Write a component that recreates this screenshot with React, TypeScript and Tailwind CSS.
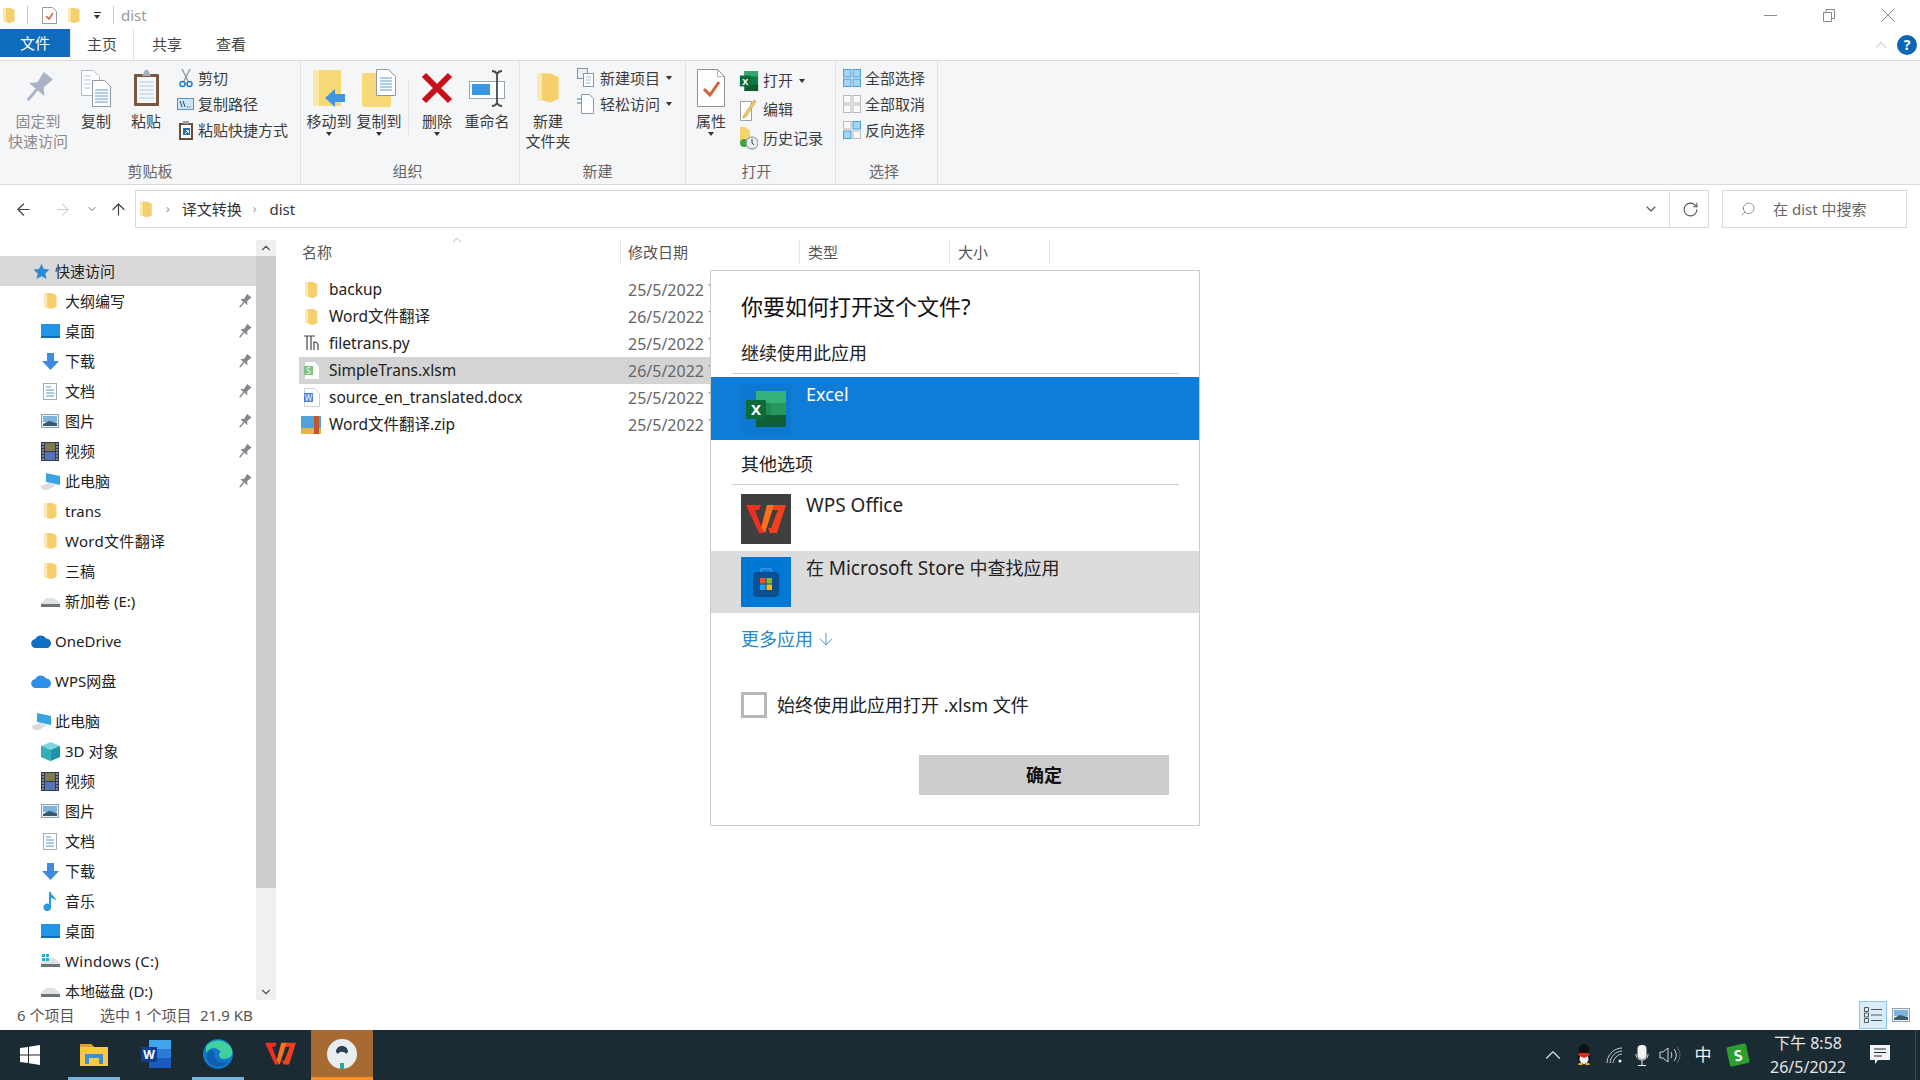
import type { ReactNode } from 'react'
import { ArrowDown, ArrowLeft, ArrowRight, ArrowUp, ChevronDown, ChevronUp, RotateCw, Search } from 'lucide-react'

const Folder = ({ w = 13, h = 17 }: { w?: number; h?: number }) => (
  <svg width={w} height={h} viewBox="0 0 13 17">
    <path d="M0 0h7l6 2v13l-6 2-7-2z" fill="#f7dc8f" />
    <path d="M2 0h6l4 2v13l-4 2-6-2z" fill="#f4cf6c" />
    <path d="M0 0h3v15H0z" fill="#fbe9b0" />
  </svg>
)

const Pin = ({ size = 15, color = '#82878e' }: { size?: number; color?: string }) => (
  <svg width={size} height={size} viewBox="0 0 16 16">
    <g transform="rotate(40 8 8)">
      <path d="M5 0h6l-1 6 3 3H3l3-3z" fill={color} />
      <path d="M8 9v7" stroke={color} strokeWidth="1.4" />
    </g>
  </svg>
)

const Caret = () => <span className="block h-0 w-0 border-x-[3px] border-t-[4px] border-x-transparent border-t-[#333]" />

const CopyDoc = () => (
  <svg width="30" height="37" viewBox="0 0 30 37" fill="none">
    <path d="M.5.5h12l6 6v19H.5z" fill="#fff" stroke="#b8bcc2" />
    <path d="M11.5 10.5h12l6 6v20h-18z" fill="#fff" stroke="#8d98a5" />
    <path d="M14 20h13M14 23h13M14 26h13M14 29h13M14 32h13" stroke="#5b9bd5" />
    <path d="M3 6h7M3 10h7M3 14h7M3 18h7" stroke="#a9c6e2" />
  </svg>
)

const Paste = () => (
  <svg width="27" height="38" viewBox="0 0 27 38" fill="none">
    <rect x="1" y="5" width="25" height="32" rx="1" fill="#7a5740" />
    <rect x="4" y="8" width="19" height="26" fill="#f4f7fa" />
    <path d="M6 13h15M6 17h15M6 21h15M6 25h15M6 29h15" stroke="#b5cde3" />
    <path d="M9 7l3-6h3l3 6z" fill="#aab0b6" />
  </svg>
)

const MoveTo = () => (
  <svg width="32" height="37" viewBox="0 0 32 37">
    <rect x="0" y="0" width="28" height="36" rx="1" fill="#f8d978" />
    <rect x="0" y="0" width="6" height="36" fill="#fbe7a8" />
    <path d="M12 28l10-9v5h10v8H22v5z" fill="#3f97e3" />
  </svg>
)

const CopyTo = () => (
  <svg width="34" height="39" viewBox="0 0 34 39" fill="none">
    <rect x="0" y="4" width="29" height="34" rx="2" fill="#f8d978" />
    <path d="M14.5.5h12l7 7v19h-19z" fill="#fff" stroke="#8d98a5" />
    <path d="M18 9h12M18 12h12M18 15h12M18 18h12M18 21h12" stroke="#5b9bd5" />
  </svg>
)

const RedX = () => (
  <svg width="32" height="32" viewBox="0 0 32 32">
    <path d="M3 3l26 26M29 3L3 29" stroke="#c8101a" strokeWidth="6" />
  </svg>
)

const Rename = () => (
  <svg width="37" height="37" viewBox="0 0 37 37" fill="none">
    <rect x=".5" y="11.5" width="35" height="17" fill="#fff" stroke="#9aa4ad" />
    <rect x="3" y="14" width="18" height="11" fill="#3b97e3" />
    <path d="M23 1c3 0 4 1 5 3 1-2 2-3 5-3M28 4v29M23 36c3 0 4-1 5-3 1 2 2 3 5 3" stroke="#4a4a4a" strokeWidth="1.8" />
  </svg>
)

const PropsIcon = () => (
  <svg width="28" height="38" viewBox="0 0 28 38" fill="none">
    <path d="M.5.5h20l7 7v30H.5z" fill="#fff" stroke="#8f8f8f" />
    <path d="M20.500.5v7h7" stroke="#b5b5b5" />
    <path d="M7 20l6 6 9-13" stroke="#d4623a" strokeWidth="3" />
  </svg>
)

const Scissors = () => (
  <svg width="14" height="19" viewBox="0 0 14 19" fill="none">
    <path d="M3 0l6 12M11 0L5 12" stroke="#8f9aa5" strokeWidth="1.4" />
    <circle cx="3.500" cy="15" r="2.500" stroke="#1f7fc4" strokeWidth="1.500" />
    <circle cx="10.500" cy="15" r="2.500" stroke="#1f7fc4" strokeWidth="1.500" />
  </svg>
)

const PathIcon = () => (
  <svg width="17" height="12" viewBox="0 0 17 12" fill="none">
    <rect x=".5" y=".5" width="16" height="11" fill="#cfe4f5" stroke="#5a93c4" />
    <path d="M3 3l2 6M6 3l2 6M10 9h1M12.500 9h1" stroke="#34495e" />
  </svg>
)

const PasteLink = () => (
  <svg width="14" height="19" viewBox="0 0 14 19">
    <rect x="0" y="2" width="14" height="17" fill="#6d4c35" />
    <rect x="2" y="4" width="10" height="13" fill="#fff" />
    <path d="M4 0h6v3H4z" fill="#9aa0a6" />
    <rect x="4" y="7" width="7" height="7" fill="#1f6fb2" />
    <path d="M6 13l3-3M7 9.500h2.500V12" stroke="#fff" fill="none" />
  </svg>
)

const NewItem = () => (
  <svg width="17" height="20" viewBox="0 0 17 20" fill="none">
    <rect x=".5" y=".5" width="10" height="10" fill="#e8eff5" stroke="#7c98b2" />
    <rect x="6.500" y="5.500" width="10" height="13" fill="#fff" stroke="#7c98b2" />
    <path d="M9 9h5M9 12h5M9 15h5" stroke="#9fb7cc" />
  </svg>
)

const EasyAccess = () => (
  <svg width="17" height="22" viewBox="0 0 17 22" fill="none">
    <path d="M4.500 1.500h8l4 4v15h-12z" fill="#fff" stroke="#8c9aa6" />
    <path d="M0 6h4M0 10h4" stroke="#2f86c9" strokeWidth="1.200" />
  </svg>
)

const ExcelMini = ({ size = 20 }: { size?: number }) => (
  <svg width={size} height={size} viewBox="0 0 20 22">
    <rect x="5" y="0" width="15" height="22" fill="#107c41" />
    <rect x="5" y="0" width="15" height="6" fill="#33a56d" />
    <rect x="5" y="15" width="15" height="7" fill="#0a5c30" />
    <rect x="0" y="5" width="12" height="12" fill="#0d6b3a" />
    <text x="6" y="15" textAnchor="middle" fontSize="10" fontWeight="700" fill="#fff">
      X
    </text>
  </svg>
)

const EditIcon = () => (
  <svg width="17" height="22" viewBox="0 0 17 22" fill="none">
    <path d="M.5 2.500h11v19H.5z" fill="#fff" stroke="#a1a1a1" />
    <path d="M4 16L14 1l2 1.500L6 18l-3 1z" fill="#f2cf62" stroke="#b08f34" strokeWidth=".6" />
  </svg>
)

const HistoryIcon = () => (
  <svg width="18" height="23" viewBox="0 0 18 23">
    <path d="M0 0h5l5 4v13H0z" fill="#f5d470" />
    <circle cx="4" cy="16" r="4" fill="#3ca63c" />
    <circle cx="12" cy="16" r="6" fill="#e9edf0" stroke="#7c8790" />
    <path d="M12 12v4l2 2" stroke="#3c3c3c" fill="none" />
  </svg>
)

const Grid4 = ({ kind }: { kind: 'all' | 'none' | 'invert' }) => {
  const on = 'fill-[#a4d3f3] stroke-[#4b9fd8]'
  const off = 'fill-[#fafafa] stroke-[#b8bcc0]'
  const cells = kind === 'all' ? [on, on, on, on] : kind === 'none' ? [off, off, off, off] : [off, on, on, off]
  return (
    <svg width="18" height="18" viewBox="0 0 18 18">
      <rect x=".5" y=".5" width="7.500" height="7.500" className={cells[0]} />
      <rect x="10" y=".5" width="7.500" height="7.500" className={cells[1]} />
      <rect x=".5" y="10" width="7.500" height="7.500" className={cells[2]} />
      <rect x="10" y="10" width="7.500" height="7.500" className={cells[3]} />
    </svg>
  )
}

const BigButton = ({
  icon,
  lines,
  width,
  className = '',
  caret,
  muted,
}: {
  icon: ReactNode
  lines: string[]
  width: string
  className?: string
  caret?: boolean
  muted?: boolean
}) => (
  <div className={`flex flex-col items-center ${width} ${className}`}>
    <div className="flex h-[50px] items-center justify-center pt-[4px]">{icon}</div>
    {lines.map((line) => (
      <div key={line} className={`whitespace-nowrap leading-[20px] ${muted ? 'text-[#8a8a8a]' : 'text-[#3c3c3c]'}`}>
        {line}
      </div>
    ))}
    {caret && (
      <div className="mt-[1px]">
        <Caret />
      </div>
    )}
  </div>
)

const SmallRow = ({
  icon,
  label,
  iconWidth,
  gap,
  height,
  caret,
}: {
  icon: ReactNode
  label: string
  iconWidth: string
  gap: string
  height: string
  caret?: string
}) => (
  <div className={`flex items-center ${height}`}>
    <div className={`flex justify-center ${iconWidth} ${gap}`}>{icon}</div>
    <span className="whitespace-nowrap text-[#3c3c3c]">{label}</span>
    {caret && (
      <span className={caret}>
        <Caret />
      </span>
    )}
  </div>
)

const Group = ({
  width,
  label,
  labelClass = '',
  children,
}: {
  width: string
  label: string
  labelClass?: string
  children: ReactNode
}) => (
  <div className={`flex h-[123px] shrink-0 flex-col border-r border-[#e2e3e4] ${width}`}>
    <div className="flex h-[98px]">{children}</div>
    <div className={`flex h-[24px] items-center justify-center text-[#666] ${labelClass}`}>{label}</div>
  </div>
)

const Ribbon = () => (
  <div className="flex h-[125px] border-y border-[#dadbdc] bg-[#f5f6f7] text-[15px]">
    <Group width="w-[301px]" label="剪贴板">
      <BigButton
        width="w-[60px]"
        className="ml-[8px]"
        muted
        icon={<Pin size={32} color="#a9b3c6" />}
        lines={['固定到', '快速访问']}
      />
      <BigButton width="w-[36px]" className="ml-[10px]" icon={<CopyDoc />} lines={['复制']} />
      <BigButton width="w-[36px]" className="ml-[14px]" icon={<Paste />} lines={['粘贴']} />
      <div className="ml-[13px] flex flex-col pt-[4px]">
        <SmallRow height="h-[26px]" iconWidth="w-[17px]" gap="mr-[4px]" icon={<Scissors />} label="剪切" />
        <SmallRow height="h-[26px]" iconWidth="w-[17px]" gap="mr-[4px]" icon={<PathIcon />} label="复制路径" />
        <SmallRow height="h-[26px]" iconWidth="w-[17px]" gap="mr-[4px]" icon={<PasteLink />} label="粘贴快捷方式" />
      </div>
    </Group>
    <Group width="w-[219px]" label="组织" labelClass="pr-[5px]">
      <BigButton width="w-[46px]" className="ml-[5px]" icon={<MoveTo />} lines={['移动到']} caret />
      <BigButton width="w-[46px]" className="ml-[4px]" icon={<CopyTo />} lines={['复制到']} caret />
      <div className="ml-[6px] mt-[19px] h-[55px] w-px bg-[#e2e3e4]" />
      <BigButton width="w-[36px]" className="ml-[10px]" icon={<RedX />} lines={['删除']} caret />
      <BigButton width="w-[46px]" className="ml-[9px]" icon={<Rename />} lines={['重命名']} />
    </Group>
    <Group width="w-[166px]" label="新建" labelClass="pr-[10px]">
      <BigButton width="w-[46px]" className="ml-[5px]" icon={<Folder w={22} h={34} />} lines={['新建', '文件夹']} />
      <div className="ml-[6px] flex flex-col pt-[4px]">
        <SmallRow height="h-[26px]" iconWidth="w-[17px]" gap="mr-[6px]" icon={<NewItem />} label="新建项目" caret="ml-[6px]" />
        <SmallRow height="h-[26px]" iconWidth="w-[17px]" gap="mr-[6px]" icon={<EasyAccess />} label="轻松访问" caret="ml-[6px]" />
      </div>
    </Group>
    <Group width="w-[150px]" label="打开" labelClass="pr-[8px]">
      <BigButton width="w-[36px]" className="ml-[7px]" icon={<PropsIcon />} lines={['属性']} caret />
      <div className="ml-[8px] flex flex-col pt-[5px]">
        <SmallRow height="h-[29px]" iconWidth="w-[23px]" gap="mr-[3px]" icon={<ExcelMini />} label="打开" caret="ml-[6px]" />
        <SmallRow height="h-[29px]" iconWidth="w-[23px]" gap="mr-[3px]" icon={<EditIcon />} label="编辑" />
        <SmallRow height="h-[29px]" iconWidth="w-[23px]" gap="mr-[3px]" icon={<HistoryIcon />} label="历史记录" />
      </div>
    </Group>
    <Group width="w-[102px]" label="选择" labelClass="pr-[5px]">
      <div className="ml-[7px] flex flex-col pt-[4px]">
        <SmallRow height="h-[26px]" iconWidth="w-[18px]" gap="mr-[4px]" icon={<Grid4 kind="all" />} label="全部选择" />
        <SmallRow height="h-[26px]" iconWidth="w-[18px]" gap="mr-[4px]" icon={<Grid4 kind="none" />} label="全部取消" />
        <SmallRow height="h-[26px]" iconWidth="w-[18px]" gap="mr-[4px]" icon={<Grid4 kind="invert" />} label="反向选择" />
      </div>
    </Group>
  </div>
)

const TitleBar = () => (
  <div className="flex h-[29px] items-center pt-[1px] text-[15px] text-[#9a9a9a]">
    <div className="ml-[3px]">
      <Folder w={12} h={15} />
    </div>
    <div className="ml-[12px] h-[18px] w-px bg-[#c8c8c8]" />
    <svg className="ml-[14px]" width="15" height="17" viewBox="0 0 15 17" fill="none">
      <path d="M.5.5h10l4 4v12H.5z" fill="#fff" stroke="#9a9a9a" />
      <path d="M4 9l3 3 4-6" stroke="#d4623a" strokeWidth="1.500" />
    </svg>
    <div className="ml-[11px]">
      <Folder w={12} h={15} />
    </div>
    <div className="ml-[12px] flex w-[10px] flex-col items-center gap-[2px]">
      <span className="h-px w-[7px] bg-[#333]" />
      <Caret />
    </div>
    <div className="ml-[11px] h-[18px] w-px bg-[#c8c8c8]" />
    <span className="ml-[7px] leading-none">dist</span>
    <div className="ml-auto flex items-center text-[#777]">
      <span className="mr-[46px] h-px w-[13px] bg-[#8a8a8a]" />
      <svg className="mr-[46px]" width="12" height="13" viewBox="0 0 12 13" fill="none" stroke="#8a8a8a">
        <path d="M.5 3.500h8v9h-8zM3 3.500v-3h8.500v9H8.500" />
      </svg>
      <svg className="mr-[25px]" width="14" height="14" viewBox="0 0 14 14" stroke="#8a8a8a">
        <path d="M.5.500l13 13M13.500.500l-13 13" />
      </svg>
    </div>
  </div>
)

const Tabs = () => (
  <div className="flex h-[31px] items-start text-[15px] text-[#444]">
    <div className="flex h-[28px] w-[70px] items-center justify-center bg-[#0f6cbd] text-white">文件</div>
    <div className="flex h-[31px] w-[64px] items-center justify-center border-x border-[#e3e3e3] pb-[1px]">主页</div>
    <div className="flex h-[31px] w-[66px] items-center justify-center pb-[1px]">共享</div>
    <div className="flex h-[31px] w-[62px] items-center justify-center pb-[1px]">查看</div>
    <div className="ml-auto flex h-[31px] items-center pr-[3px]">
      <ChevronUp size={20} strokeWidth={1} color="#aaa" />
      <div className="ml-[6px] flex h-[20px] w-[20px] items-center justify-center rounded-full bg-[#0a66b7] text-[14px] font-bold text-white">
        ?
      </div>
    </div>
  </div>
)

const AddressBar = () => (
  <div className="flex h-[46px] pt-[5px] text-[15px]">
    <div className="flex h-[38px] w-[135px] items-center text-[#444]">
      <ArrowLeft className="ml-[14px]" size={19} strokeWidth={1.5} />
      <ArrowRight className="ml-[20px]" size={19} strokeWidth={1.3} color="#ccc" />
      <ChevronDown className="ml-[14px]" size={12} strokeWidth={1.6} />
      <ArrowUp className="ml-[11px]" size={19} strokeWidth={1.5} />
    </div>
    <div className="flex h-[38px] w-[1574px] items-center border border-[#d9d9d9] text-[#333]">
      <span className="ml-[4px]">
        <Folder w={12} h={17} />
      </span>
      <span className="ml-[14px] text-[12px] text-[#999]">›</span>
      <span className="ml-[12px]">译文转换</span>
      <span className="ml-[11px] text-[12px] text-[#999]">›</span>
      <span className="ml-[13px]">dist</span>
      <ChevronDown className="ml-auto mr-[10px]" size={16} strokeWidth={1.6} color="#555" />
      <div className="flex h-full w-[39px] items-center justify-center border-l border-[#d9d9d9]">
        <RotateCw className="ml-[2px]" size={17} strokeWidth={1.5} color="#555" />
      </div>
    </div>
    <div className="ml-[13px] flex h-[38px] w-[185px] items-center border border-[#d9d9d9] text-[#666]">
      <Search className="ml-[17px] -scale-x-100" size={16} strokeWidth={1} />
      <span className="ml-[17px]">在 dist 中搜索</span>
    </div>
  </div>
)

const ScreenIcon = () => (
  <svg width="19" height="14" viewBox="0 0 19 14">
    <rect x="0" y="0" width="19" height="14" fill="#2196e8" />
    <path d="M0 12h19v2H0z" fill="#0c6cb6" />
  </svg>
)

const DownIcon = () => (
  <svg width="17" height="17" viewBox="0 0 17 17">
    <path d="M5 0h7v8h5l-8.500 9L0 8h5z" fill="#3c8be0" />
  </svg>
)

const DocIcon = () => (
  <svg width="14" height="17" viewBox="0 0 14 17" fill="none">
    <rect x=".5" y=".5" width="13" height="16" fill="#fff" stroke="#a4adb5" />
    <path d="M3 4h5M3 7h8M3 10h8M3 13h8" stroke="#5d98c8" />
  </svg>
)

const PicIcon = () => (
  <svg width="18" height="14" viewBox="0 0 18 14">
    <rect x=".5" y=".5" width="17" height="13" fill="#eef3f7" stroke="#8fa2b3" />
    <rect x="2" y="2" width="14" height="6" fill="#7db4dc" />
    <path d="M2 10l6-3 8 2v3H2z" fill="#3c5a6e" />
  </svg>
)

const VideoIcon = () => (
  <svg width="18" height="19" viewBox="0 0 18 19">
    <rect width="18" height="19" fill="#2f3d4c" />
    <rect x="4" y="1" width="10" height="8" fill="#7e7a4a" />
    <rect x="4" y="10" width="10" height="8" fill="#5674b8" />
    <path d="M1 2h2M1 5h2M1 8h2M1 11h2M1 14h2M1 17h2M15 2h2M15 5h2M15 8h2M15 11h2M15 14h2M15 17h2" stroke="#cfd4d9" />
  </svg>
)

const PcIcon = () => (
  <svg width="20" height="17" viewBox="0 0 20 17">
    <path d="M6 0l14 3v9L6 9z" fill="#3ba3e0" />
    <path d="M0 13l9-3 7 2-8 5H3z" fill="#d8dde2" />
  </svg>
)

const DriveIcon = ({ win }: { win?: boolean }) => (
  <svg width="19" height="14" viewBox="0 0 19 14">
    <path d="M5 4h8l6 5v3H0V9z" fill="#dfe1e3" />
    <path d="M0 10h19v3H0z" fill="#6d7479" />
    {win && <path d="M1 0h3v3H1zM5 0h3v3H5zM1 4h3v3H1zM5 4h3v3H5z" fill="#24b0c8" />}
  </svg>
)

const StarIcon = () => (
  <svg width="17" height="17" viewBox="0 0 24 24">
    <path d="M12 1l3.400 7.400 8 .9-6 5.400 1.700 8L12 18.600 4.900 22.700l1.700-8-6-5.400 8-.9z" fill="#2b8ad8" />
  </svg>
)

const CloudIcon = ({ color = '#0f6fc4' }: { color?: string }) => (
  <svg width="20" height="14" viewBox="0 0 20 14">
    <path d="M5 14a4.500 4.500 0 0 1-.6-9A6 6 0 0 1 15 4.500 4.700 4.700 0 0 1 15.500 14z" fill={color} />
  </svg>
)

const CubeIcon = () => (
  <svg width="19" height="19" viewBox="0 0 19 19">
    <path d="M9.500 0L19 4v11l-9.500 4L0 15V4z" fill="#7fd4dd" />
    <path d="M0 4l9.500 4v11L0 15z" fill="#33aeb9" />
    <path d="M19 4L9.500 8v11l9.500-4z" fill="#1b95a6" />
  </svg>
)

const MusicIcon = () => (
  <svg width="14" height="19" viewBox="0 0 14 19">
    <path d="M6 0h2c0 4 5 4 5 9-1-2-3-3-5-3v9a3.800 3.800 0 1 1-2-3z" fill="#2b9be0" />
  </svg>
)

type NavItem = {
  icon: ReactNode
  label: string
  pinned?: boolean
  level?: 1 | 2
  selected?: boolean
  gap?: boolean
  wide?: boolean
}

const navItems: NavItem[] = [
  { icon: <StarIcon />, label: '快速访问', level: 1, selected: true },
  { icon: <Folder w={13} h={16} />, label: '大纲编写', pinned: true },
  { icon: <ScreenIcon />, label: '桌面', pinned: true },
  { icon: <DownIcon />, label: '下载', pinned: true },
  { icon: <DocIcon />, label: '文档', pinned: true },
  { icon: <PicIcon />, label: '图片', pinned: true },
  { icon: <VideoIcon />, label: '视频', pinned: true },
  { icon: <PcIcon />, label: '此电脑', pinned: true },
  { icon: <Folder w={13} h={16} />, label: 'trans' },
  { icon: <Folder w={13} h={16} />, label: 'Word文件翻译', wide: true },
  { icon: <Folder w={13} h={16} />, label: '三稿' },
  { icon: <DriveIcon />, label: '新加卷 (E:)' },
  { icon: <CloudIcon />, label: 'OneDrive', level: 1, gap: true },
  { icon: <CloudIcon color="#2f8fe6" />, label: 'WPS网盘', level: 1, gap: true },
  { icon: <PcIcon />, label: '此电脑', level: 1, gap: true },
  { icon: <CubeIcon />, label: '3D 对象' },
  { icon: <VideoIcon />, label: '视频' },
  { icon: <PicIcon />, label: '图片' },
  { icon: <DocIcon />, label: '文档' },
  { icon: <DownIcon />, label: '下载' },
  { icon: <MusicIcon />, label: '音乐' },
  { icon: <ScreenIcon />, label: '桌面' },
  { icon: <DriveIcon win />, label: 'Windows (C:)', wide: true },
  { icon: <DriveIcon />, label: '本地磁盘 (D:)' },
]

const Sidebar = () => (
  <div className="flex w-[276px] shrink-0">
    <div className="w-[256px] overflow-hidden pt-[25px] text-[15px] text-[#222]">
      {navItems.map((item, i) => (
        <div
          key={i}
          className={`flex h-[30px] items-center ${item.gap ? 'mt-[10px]' : ''} ${item.selected ? 'bg-[#d9d9d9]' : ''}`}
        >
          <div className={`flex justify-center ${item.level === 1 ? 'ml-[31px] w-[20px]' : 'ml-[40px] w-[20px]'}`}>
            {item.icon}
          </div>
          <span
            className={`whitespace-nowrap ${item.level === 1 ? 'ml-[4px]' : 'ml-[5px]'} ${item.wide ? 'tracking-[0.3px]' : ''}`}
          >
            {item.label}
          </span>
          {item.pinned && (
            <span className="ml-auto mr-[4px]">
              <Pin />
            </span>
          )}
        </div>
      ))}
    </div>
    <div className="flex w-[20px] flex-col pt-[9px]">
      <div className="flex h-[16px] items-center justify-center bg-[#f0f0f0]">
        <ChevronUp size={14} strokeWidth={2} color="#555" />
      </div>
      <div className="h-[632px] bg-[#cdcdcd]" />
      <div className="flex-1 bg-[#f0f0f0]" />
      <div className="flex h-[17px] items-center justify-center bg-[#f0f0f0]">
        <ChevronDown size={14} strokeWidth={2} color="#555" />
      </div>
    </div>
  </div>
)

const PyIcon = () => (
  <svg width="17" height="17" viewBox="0 0 17 17" fill="none" stroke="#444" strokeWidth="1.200">
    <path d="M1 1h11M4 1v14M8 1v14M11 15V7c3 0 4 2 4 4v4" />
  </svg>
)

const FileIcon = ({ mark, color }: { mark: string; color: string }) => (
  <svg width="17" height="19" viewBox="0 0 17 19" fill="none">
    <path d="M1.500.5h10l5 5v13h-15z" fill="#fff" stroke="#cdd2d6" />
    <rect x="1" y="5" width="9" height="9" fill={color} />
    <text x="5.500" y="12.500" textAnchor="middle" fontSize="8" fill="#fff">
      {mark}
    </text>
  </svg>
)

const ZipIcon = () => (
  <svg width="20" height="18" viewBox="0 0 20 18">
    <rect width="20" height="12" fill="#4fa3dc" />
    <rect y="12" width="20" height="6" fill="#e3b44a" />
    <rect x="13" width="5" height="18" fill="#c2572b" />
  </svg>
)

const files: { icon: ReactNode; name: string; date: string; selected?: boolean }[] = [
  { icon: <Folder w={13} h={16} />, name: 'backup', date: '25/5/2022 7:45' },
  { icon: <Folder w={13} h={16} />, name: 'Word文件翻译', date: '26/5/2022 7:45' },
  { icon: <PyIcon />, name: 'filetrans.py', date: '25/5/2022 7:45' },
  { icon: <FileIcon mark="S" color="#7cc47f" />, name: 'SimpleTrans.xlsm', date: '26/5/2022 7:45', selected: true },
  { icon: <FileIcon mark="W" color="#4d7fd0" />, name: 'source_en_translated.docx', date: '25/5/2022 7:45' },
  { icon: <ZipIcon />, name: 'Word文件翻译.zip', date: '25/5/2022 7:45' },
]

const FileList = () => (
  <div className="flex-1 pt-[9px]">
    <div className="flex h-[24px] text-[15px] text-[#555]">
      <div className="relative flex w-[345px] items-center border-r border-[#e5e5e5] pl-[26px]">
        <span>名称</span>
        <ChevronUp className="absolute left-[174px] top-[-7px]" size={14} strokeWidth={1} color="#888" />
      </div>
      <div className="flex w-[179px] items-center border-r border-[#e5e5e5] pl-[7px]">修改日期</div>
      <div className="flex w-[150px] items-center border-r border-[#e5e5e5] pl-[8px]">类型</div>
      <div className="flex w-[100px] items-center border-r border-[#e5e5e5] pl-[8px]">大小</div>
    </div>
    <div className="mt-[12px] w-[436px]">
      {files.map((file) => (
        <div key={file.name} className={`ml-[23px] flex h-[27px] items-center ${file.selected ? 'bg-[#d4d4d4]' : ''}`}>
          <div className="ml-[1px] flex w-[22px] shrink-0 justify-center">{file.icon}</div>
          <span className="ml-[7px] mt-[1px] w-[299px] shrink-0 whitespace-nowrap text-[15.5px] text-[#222]">{file.name}</span>
          <span className="shrink-0 whitespace-nowrap text-[16px] text-[#666]">{file.date}</span>
        </div>
      ))}
    </div>
  </div>
)

const StatusBar = () => (
  <div className="flex h-[30px] items-center text-[15px] text-[#555]">
    <span className="ml-[17px] w-[83px]">6 个项目</span>
    <span className="w-[100px]">选中 1 个项目</span>
    <span>21.9 KB</span>
    <div className="ml-auto mr-[10px] flex items-center">
      <div className="flex h-[28px] w-[28px] items-center justify-center border border-[#8ec5ea] bg-[#d9ecf9]">
        <svg width="18" height="16" viewBox="0 0 18 16" fill="none" stroke="#555">
          <path d="M.5.500h4v4h-4zM.5 6h4v4h-4zM.5 11.500h4v4h-4zM7 2.500h11M7 8h11M7 13.500h11" />
        </svg>
      </div>
      <div className="ml-[5px]">
        <PicIcon />
      </div>
    </div>
  </div>
)

const WpsLogo = ({ width = 36 }: { width?: number }) => (
  <svg width={width} height={width * 0.75} viewBox="0 0 40 30">
    <path d="M0 1h15l-2 5H9l6 16 3 7h-5z" fill="#ee2f24" />
    <path d="M28 1h12l-9 28h-7l-2-5h3l7-18h-6z" fill="#f2401f" />
    <path d="M21 1h7l-9 28-4-5z" fill="#ff6f1c" />
  </svg>
)

const AppButton = ({
  children,
  active,
  open,
}: {
  children: ReactNode
  active?: boolean
  open?: boolean
}) => (
  <div className={`flex h-[50px] w-[62px] flex-col ${active ? 'bg-[#a66a32]' : ''}`}>
    <div className="flex flex-1 items-center justify-center">{children}</div>
    <div className={`h-[3px] ${active ? 'bg-[#f8911d]' : open ? 'mx-[5px] bg-[#76b4e0]' : ''}`} />
  </div>
)

const Taskbar = () => (
  <div className="flex h-[50px] items-center bg-[#1b2b33] text-white">
    <svg className="ml-[20px] mr-[23px]" width="20" height="20" viewBox="0 0 20 20" fill="#fff">
      <path d="M0 3l8-1v7.500H0zM9 1.800L20 0v9.500H9zM0 10.500h8V18l-8-1zM9 10.500h11V20L9 18.200z" />
    </svg>
    <AppButton open>
      <svg width="28" height="24" viewBox="0 0 28 24">
        <path d="M0 2h11l3 3h14v19H0z" fill="#f6c945" />
        <path d="M0 2h11l3 3H0z" fill="#d9a12b" />
        <path d="M7 22v-8h14v8" fill="none" stroke="#3c8fd0" strokeWidth="4" />
      </svg>
    </AppButton>
    <AppButton>
      <svg width="30" height="28" viewBox="0 0 30 28">
        <rect x="8" y="0" width="22" height="28" rx="2" fill="#2b7cd3" />
        <rect x="8" y="0" width="22" height="9" fill="#41a5ee" />
        <rect x="8" y="18" width="22" height="10" fill="#185abd" />
        <rect x="0" y="7" width="16" height="15" fill="#103f91" />
        <text x="8" y="19" textAnchor="middle" fontSize="12" fontWeight="700" fill="#fff">
          W
        </text>
      </svg>
    </AppButton>
    <AppButton open>
      <svg width="30" height="30" viewBox="0 0 30 30">
        <circle cx="15" cy="15" r="15" fill="#1277c9" />
        <path d="M3 8C7 0 24-2 29 11c2 7-4 9-8 9-3 0-5-2-5-4s3-3 0-5C10 7 6 10 3 14z" fill="#3fd0a0" />
        <path d="M12 17c0 6 6 8 13 6-6 8-19 5-21-4-1-4 1-7 4-8 3 0 4 3 4 6z" fill="#0d5fb0" />
      </svg>
    </AppButton>
    <AppButton>
      <WpsLogo width={31} />
    </AppButton>
    <AppButton active>
      <svg width="30" height="30" viewBox="0 0 30 30">
        <circle cx="15" cy="15" r="15" fill="#e8eef0" />
        <path d="M9 13c0-8 12-8 12 0l-2 2c-1-3-7-3-8 0z" fill="#2c3e50" />
        <rect x="13" y="24" width="4" height="6" fill="#2ca6a4" />
      </svg>
    </AppButton>
    <div className="ml-auto flex h-full items-center">
      <div className="flex w-[32px] justify-center">
        <ChevronUp size={26} strokeWidth={1} color="#e6e6e6" />
      </div>
      <div className="flex w-[31px] justify-center">
        <svg className="mr-[2px]" width="16" height="22" viewBox="0 0 16 22">
          <ellipse cx="8" cy="7" rx="5.500" ry="7" fill="#111" />
          <ellipse cx="8" cy="14" rx="6.500" ry="6" fill="#111" />
          <ellipse cx="8" cy="15" rx="4.500" ry="5" fill="#f4f4f4" />
          <path d="M2.500 9h11v2.500L8 14l-5.500-2.500z" fill="#d9291c" />
          <path d="M2 21h5l-1-2H3zM14 21H9l1-2h3z" fill="#f2a81d" />
        </svg>
      </div>
      <div className="flex w-[28px] justify-center">
        <svg width="17" height="17" viewBox="0 0 17 17" fill="none" stroke="#c8c8c8">
          <path d="M1 16C1 8 8 1 16 1M4 16c0-6 6-12 12-12M7 16c0-4 5-9 9-9" />
          <circle cx="14" cy="14" r="1.500" fill="#fff" stroke="none" />
        </svg>
      </div>
      <div className="flex w-[28px] justify-center">
        <svg width="14" height="21" viewBox="0 0 14 21" fill="none">
          <rect x="2.500" y="0" width="9" height="14" rx="4" fill="#f2f2f2" />
          <path d="M1 9c0 8 12 8 12 0M7 15v5M3 20.500h8" stroke="#f2f2f2" />
        </svg>
      </div>
      <div className="flex w-[28px] justify-center">
        <svg width="22" height="18" viewBox="0 0 22 18" fill="none" stroke="#d8d8d8">
          <path d="M1 6h3l5-4v14l-5-4H1zM12 6c1 2 1 4 0 6M15 3c3 4 3 8 0 12" />
          <path d="M18 1c4 5 4 11 0 16" stroke="#5a6a72" />
        </svg>
      </div>
      <div className="w-[38px] text-center text-[17px] text-[#f0f0f0]">中</div>
      <div className="flex w-[32px] justify-center">
        <div className="flex h-[20px] w-[20px] -rotate-12 items-center justify-center rounded-[2px] bg-[#2e9e2e] text-[15px] font-bold leading-none">
          S
        </div>
      </div>
      <div className="w-[108px] text-center text-[16px] leading-[24px] text-[#e6e6e6]">
        <div>下午 8:58</div>
        <div>26/5/2022</div>
      </div>
      <div className="flex w-[36px] justify-center">
        <svg width="20" height="21" viewBox="0 0 20 21" fill="none">
          <path d="M0 0h20v15H8l-3 4v-4H0z" fill="#f4f4f4" />
          <path d="M4 4h12M4 7.500h12M4 11h8" stroke="#1b2b33" />
        </svg>
      </div>
      <div className="ml-[17px] mr-[4px] h-full w-px bg-[#3a4a52]" />
    </div>
  </div>
)

const OpenWithDialog = () => (
  <div className="absolute left-[710px] top-[270px] h-[556px] w-[490px] border border-[#cccccc] bg-white pt-[19px] text-[18px] text-[#222]">
    <div className="ml-[30px] h-[32px] text-[22px] leading-[32px] text-[#111]">你要如何打开这个文件?</div>
    <div className="ml-[30px] mt-[18px] h-[26px] leading-[26px]">继续使用此应用</div>
    <div className="ml-[21px] mt-[7px] h-px w-[447px] bg-[#cfcfcf]" />
    <div className="mt-[3px] flex h-[63px] items-start bg-[#0f7dd8] pt-[7px] text-white">
      <div className="ml-[30px] flex h-[50px] w-[50px] items-center justify-center bg-[#0c78d0]">
        <svg width="40" height="36" viewBox="0 0 40 36">
          <rect x="10" y="0" width="30" height="36" rx="2" fill="#1f8a55" />
          <rect x="10" y="0" width="30" height="12" fill="#33b27a" />
          <rect x="25" y="12" width="15" height="12" fill="#25975f" />
          <rect x="10" y="24" width="30" height="12" fill="#0f5f38" />
          <rect x="0" y="9" width="20" height="19" rx="1" fill="#0e6a3b" />
          <text x="10" y="24" textAnchor="middle" fontSize="15" fontWeight="700" fill="#fff">
            X
          </text>
        </svg>
      </div>
      <span className="ml-[15px] mt-[-2px] leading-[24px]">Excel</span>
    </div>
    <div className="ml-[30px] mt-[11px] h-[26px] leading-[26px]">其他选项</div>
    <div className="ml-[21px] mt-[7px] h-px w-[447px] bg-[#cfcfcf]" />
    <div className="flex h-[66px] items-start pt-[9px]">
      <div className="ml-[30px] flex h-[50px] w-[50px] items-center justify-center bg-[#3f3f3f]">
        <WpsLogo width={40} />
      </div>
      <span className="ml-[15px] mt-[-1px] text-[19px] leading-[24px]">WPS Office</span>
    </div>
    <div className="flex h-[62px] items-start bg-[#dcdcdc] pt-[6px]">
      <div className="ml-[30px] flex h-[50px] w-[50px] items-center justify-center bg-[#0078d4]">
        <svg width="26" height="30" viewBox="0 0 26 30">
          <rect x="0" y="5" width="26" height="25" rx="4" fill="#0a4f8f" />
          <path d="M8 5V2h10v3" fill="none" stroke="#2a8fdc" strokeWidth="2" />
          <rect x="7" y="11" width="5.500" height="5.500" fill="#f0512a" />
          <rect x="13.500" y="11" width="5.500" height="5.500" fill="#7fba2a" />
          <rect x="7" y="17.500" width="5.500" height="5.500" fill="#1fa3e8" />
          <rect x="13.500" y="17.500" width="5.500" height="5.500" fill="#fdb813" />
        </svg>
      </div>
      <span className="ml-[15px] mt-[-1px] leading-[24px]">
        在 <span className="text-[19px]">Microsoft Store</span> 中查找应用
      </span>
    </div>
    <div className="ml-[30px] mt-[13px] flex h-[26px] items-center gap-[3px] text-[#2b88c9]">
      <span>更多应用</span>
      <ArrowDown size={20} strokeWidth={1} />
    </div>
    <div className="mt-[40px] flex h-[26px] items-center">
      <div className="ml-[30px] h-[26px] w-[26px] border-[3px] border-[#b8b8b8]" />
      <span className="ml-[10px]">始终使用此应用打开 .xlsm 文件</span>
    </div>
    <div className="ml-[208px] mt-[37px] flex h-[40px] w-[250px] items-center justify-center bg-[#cccccc] font-bold text-[#111]">
      确定
    </div>
  </div>
)

export default function App() {
  return (
    <div className="relative flex h-[1080px] w-[1920px] flex-col overflow-hidden bg-white font-['Noto_Sans','Noto_Sans_CJK_SC',sans-serif]">
      <TitleBar />
      <Tabs />
      <Ribbon />
      <AddressBar />
      <div className="flex h-[769px] overflow-hidden">
        <Sidebar />
        <FileList />
      </div>
      <StatusBar />
      <Taskbar />
      <OpenWithDialog />
    </div>
  )
}
